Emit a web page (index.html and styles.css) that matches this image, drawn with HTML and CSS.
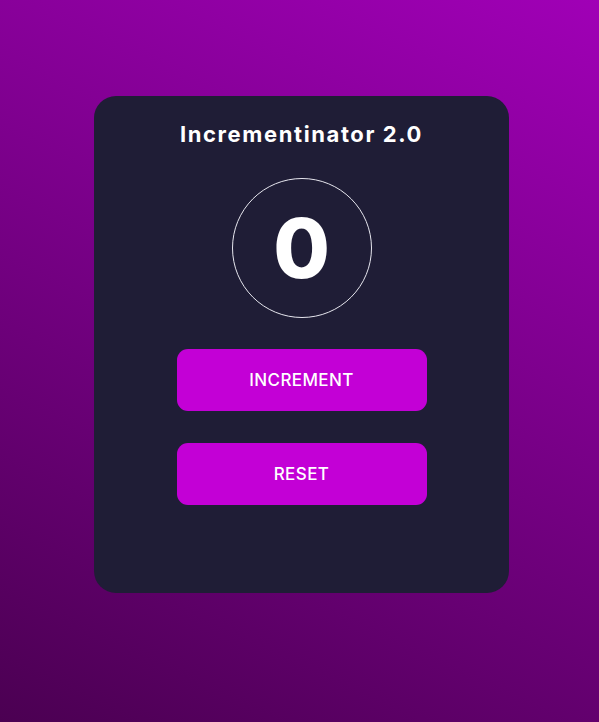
FILE: index.html
```html
<!DOCTYPE html>
<html>
<head>
    <title>Incrementinator 2.0</title>
    <link rel="stylesheet" href="styles.css">
</head>
<body>
    <div class="card">
        <h1 class="title">Incrementinator 2.0</h1>
        <div class="counter"><span id="count">0</span></div>
        <button id="increment-btn" class="btn">INCREMENT</button>
        <button id="reset-btn" class="btn">RESET</button>
    </div>

    <script>
        var count = 0;
        var countEl = document.getElementById("count");

        document.getElementById("increment-btn").addEventListener("click", function() {
            count++;
            countEl.innerHTML = count;
        });

        document.getElementById("reset-btn").addEventListener("click", function() {
            count = 0;
            countEl.innerHTML = count;
        });
    </script>
</body>
</html>
```

FILE: styles.css
```css
html {
    min-height: 100%;
}

body {
    font-family: Inter, "Open Sans", sans-serif;
    margin: 0;
    padding: 96px 0 0 4px;
    min-height: 722px;
    box-sizing: border-box;
    background: linear-gradient(205deg, #a000b6, #4b0052);
}

.card {
    width: 415px;
    height: 497px;
    margin: 0 auto;
    background-color: #1f1d36;
    border-radius: 22px;
    display: flex;
    flex-direction: column;
    align-items: center;
    box-sizing: border-box;
    padding-top: 22px;
}

.title {
    margin: 0;
    color: #fff;
    font-size: 22px;
    font-weight: 700;
    line-height: 32px;
    letter-spacing: 1.6px;
}

.counter {
    width: 140px;
    height: 140px;
    margin-top: 28px;
    border: 1px solid #e6e6ee;
    border-radius: 50%;
    box-sizing: border-box;
    display: flex;
    align-items: center;
    justify-content: center;
    color: #fff;
    font-size: 82px;
    font-weight: 800;
}

.btn {
    width: 250px;
    height: 62px;
    margin-top: 31px;
    border: none;
    border-radius: 11px;
    background-color: #c300d6;
    color: #fff;
    font-family: inherit;
    font-size: 17px;
    font-weight: 500;
    letter-spacing: 0.4px;
    cursor: pointer;
}

.btn + .btn {
    margin-top: 32px;
}
```
